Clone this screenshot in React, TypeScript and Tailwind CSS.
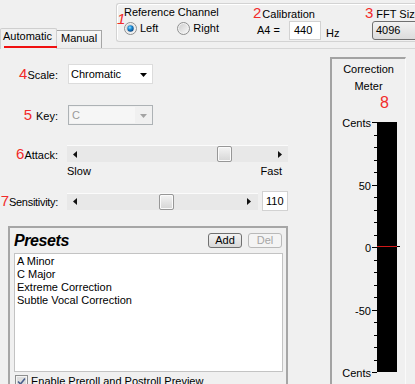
import React from 'react';

function Num({ n, className = '' }: { n: string; className?: string }) {
  return <span className={`text-[15px] leading-[15px] text-[#f22b2b] ${className}`}>{n}</span>;
}

function DropArrow({ color = '#000' }: { color?: string }) {
  return (
    <svg width="7" height="4" viewBox="0 0 7 4" className="block">
      <path d="M0 0 H7 L3.5 4 Z" fill={color} />
    </svg>
  );
}

function Radio({ checked, id }: { checked?: boolean; id: string }) {
  return (
    <svg width="13" height="13" viewBox="0 0 13 13" className="block shrink-0">
      <defs>
        <linearGradient id={`${id}-ring`} x1="0" y1="0" x2="1" y2="1">
          <stop offset="0" stopColor="#cfcfcf" />
          <stop offset="1" stopColor="#f7f7f7" />
        </linearGradient>
        <radialGradient id={`${id}-dot`} cx="0.4" cy="0.35" r="0.7">
          <stop offset="0" stopColor="#8fe0ff" />
          <stop offset="0.45" stopColor="#1a8ad6" />
          <stop offset="1" stopColor="#0b3f77" />
        </radialGradient>
      </defs>
      <circle cx="6.5" cy="6.5" r="6" fill="#f2f2f2" stroke="#8e8f8f" />
      <circle cx="6.5" cy="6.5" r="4.5" fill={`url(#${id}-ring)`} />
      {checked && <circle cx="6.5" cy="6.5" r="3.2" fill={`url(#${id}-dot)`} />}
    </svg>
  );
}

function Checkbox() {
  return (
    <svg width="13" height="13" viewBox="0 0 13 13" className="block shrink-0">
      <rect x="0.5" y="0.5" width="12" height="12" fill="#f4f4f4" stroke="#8e8f8f" />
      <rect x="2" y="2" width="9" height="9" fill="#dedede" />
      <path d="M3 6.5 L5.5 9 L10 3.5" fill="none" stroke="#4a5e8c" strokeWidth="1.6" />
    </svg>
  );
}

function ScrollSlider({ track, thumb, rightPad }: { track: string; thumb: string; rightPad: string }) {
  return (
    <div className={`relative flex h-[17px] items-center justify-between border-t border-[#fbfbfb] bg-[#e8e8e8] pl-[6px] ${rightPad} ${track}`}>
      <svg width="4" height="7" viewBox="0 0 4 7" className="block">
        <path d="M4 0 L0 3.5 L4 7 Z" fill="#111" />
      </svg>
      <svg width="4" height="7" viewBox="0 0 4 7" className="block">
        <path d="M0 0 L4 3.5 L0 7 Z" fill="#111" />
      </svg>
      <div
        className={`absolute top-0 h-[16px] w-[15px] rounded-[2px] border border-[#979797] bg-gradient-to-b from-[#f4f4f4] to-[#d6d6d6] shadow-[inset_0_0_0_1px_#fbfbfb] ${thumb}`}
      />
    </div>
  );
}

function FieldLabel({ n, text, textClass = '' }: { n: string; text: string; textClass?: string }) {
  return (
    <div className="flex w-[58px] shrink-0 items-baseline justify-end">
      <Num n={n} />
      <span className={textClass}>{text}</span>
    </div>
  );
}

function MeterScale() {
  const top = 11;
  const step = 12.5;
  const labels: Record<number, string> = { 0: 'Cents', 5: '50', 10: '0', 15: '-50', 20: 'Cents' };
  const ticks = Array.from({ length: 21 }, (_, i) => i);
  return (
    <svg width="73" height="275" viewBox="0 0 73 275" className="block">
      <rect x="45" y={top} width="20" height="250" fill="#000" />
      {ticks.map((i) => {
        const y = Math.round(top + i * step) + 0.5;
        const major = labels[i] !== undefined;
        return (
          <g key={i}>
            <line x1={major ? 40 : 42} x2="45" y1={y} y2={y} stroke="#000" strokeWidth="1" />
            {major && (
              <text
                x="39"
                y={y + 4}
                textAnchor="end"
                fontSize="11"
                fontFamily="'Liberation Sans', Arial, sans-serif"
                fill="#000"
              >
                {labels[i]}
              </text>
            )}
          </g>
        );
      })}
      <line x1="45" x2="65" y1="135.5" y2="135.5" stroke="#d01818" strokeWidth="1" />
      <line x1="65" x2="68" y1="135.5" y2="135.5" stroke="#000" strokeWidth="1" />
    </svg>
  );
}

export default function App() {
  return (
    <div className="h-[384px] w-[415px] overflow-hidden bg-[#f0f0f0] font-['Liberation_Sans',Arial,sans-serif] text-[11px] leading-[13px] text-black">
      {/* top strip: tabs + settings group */}
      <div className="flex h-[49px] border-b border-[#d6d6d6]">
        <div className="-mb-px flex items-end self-end">
          <div className="h-[21px] w-[57px] rounded-t-[2px] border border-b-0 border-[#cfcfcf] bg-[#f0f0f0] pl-[2px] pt-[1px]">
            <div>Automatic</div>
            <div className="ml-px mt-[3px] h-[2px] w-[53px] bg-[#f01010]" />
          </div>
          <div className="mb-px h-[18px] w-[45px] border-r border-t border-[#a5a5a5] bg-gradient-to-b from-[#f7f7f7] to-[#ececec] pl-[4px] pt-[1px]">
            Manual
          </div>
        </div>

        <div className="ml-[14px] mt-[3px] flex h-[39px] w-[320px] shrink-0 rounded-l-[3px] border border-r-0 border-[#d3d3d3] shadow-[inset_1px_1px_0_#fff]">
          {/* Reference Channel */}
          <div className="flex w-[136px] shrink-0">
            <Num n="1" className="mt-[7px] w-[7px] italic" />
            <div className="flex flex-col pt-[2px]">
              <div>Reference Channel</div>
              <div className="mt-[3px] flex h-[13px] items-center">
                <Radio id="r-left" checked />
                <span className="ml-[3px]">Left</span>
                <div className="ml-[19px]">
                  <Radio id="r-right" />
                </div>
                <span className="ml-[3px]">Right</span>
              </div>
            </div>
          </div>

          {/* Calibration */}
          <div className="flex w-[112px] shrink-0 flex-col">
            <div className="flex h-[17px] items-baseline pt-px">
              <Num n="2" />
              <span className="ml-px">Calibration</span>
            </div>
            <div className="flex h-[19px] items-center">
              <span className="ml-[4px] w-[32px]">A4 =</span>
              <div className="flex h-[19px] w-[32px] items-center border border-[#d2d2d2] bg-white pl-[4px]">440</div>
              <span className="ml-[5px] pt-[5px]">Hz</span>
            </div>
          </div>

          {/* FFT Size */}
          <div className="flex flex-1 flex-col">
            <div className="flex h-[17px] items-baseline pt-px">
              <Num n="3" />
              <span className="ml-[3px]">FFT Size</span>
            </div>
            <div className="ml-[7px] flex h-[19px] w-[70px] items-center rounded-[3px] border border-[#707070] bg-gradient-to-b from-[#f2f2f2] to-[#dcdcdc] pl-[3px]">
              4096
            </div>
          </div>
        </div>
      </div>

      {/* body */}
      <div className="flex">
        <div className="flex w-[330px] shrink-0 flex-col">
          {/* Scale */}
          <div className="mt-[15px] flex h-[20px] items-center">
            <FieldLabel n="4" text="Scale:" />
            <div className="relative ml-[10px] flex h-[20px] w-[85px] items-center border border-[#dcdcdc] bg-white pl-[2px]">
              Chromatic
              <div className="absolute right-[5px] top-[8px]">
                <DropArrow />
              </div>
            </div>
          </div>

          {/* Key */}
          <div className="mt-[21px] flex h-[20px] items-center">
            <FieldLabel n="5" text="Key:" textClass="ml-[4px]" />
            <div className="relative ml-[10px] flex h-[20px] w-[85px] items-center border border-[#adb2b5] bg-[#f0f0f0] p-px">
              <div className="flex h-full w-[65px] items-center bg-[#f6f6f6] pl-[2px] text-[#9a9a9a]">C</div>
              <div className="absolute right-[5px] top-[8px]">
                <DropArrow color="#a3a3a3" />
              </div>
            </div>
          </div>

          {/* Attack */}
          <div className="mt-[20px] flex h-[17px] items-center">
            <FieldLabel n="6" text="Attack:" />
            <div className="ml-[9px]">
              <ScrollSlider track="w-[221px]" thumb="left-[150px]" rightPad="pr-[6px]" />
            </div>
          </div>
          <div className="ml-[67px] mt-[3px] flex w-[221px] justify-between pr-[6px]">
            <span>Slow</span>
            <span>Fast</span>
          </div>

          {/* Sensitivity */}
          <div className="mt-[13px] flex h-[20px] items-center">
            <FieldLabel n="7" text="Sensitivity:" textClass="tracking-[-0.3px]" />
            <div className="ml-[9px]">
              <ScrollSlider track="w-[191px]" thumb="left-[92px]" rightPad="pr-[7px]" />
            </div>
            <div className="ml-[4px] flex h-[20px] w-[26px] items-center border border-[#d2d2d2] bg-white pl-[3px]">110</div>
          </div>

          {/* Presets */}
          <div className="ml-[8px] mt-[15px] h-[170px] w-[280px] shrink-0 border-2 border-[#a6a6a6]">
            <div className="mt-[3px] flex h-[19px] items-center pl-[4px] pr-[4px]">
              <span className="text-[16px] font-bold italic leading-[19px] tracking-[-0.4px]">Presets</span>
              <div className="ml-auto flex gap-[6px]">
                <div className="flex h-[15px] w-[34px] items-center justify-center rounded-[3px] border border-[#707070] bg-gradient-to-b from-[#f3f3f3] to-[#d9d9d9]">
                  Add
                </div>
                <div className="flex h-[15px] w-[34px] items-center justify-center rounded-[3px] border border-[#b9b9b9] bg-[#f4f4f4] text-[#a6a6a6]">
                  Del
                </div>
              </div>
            </div>
            <div className="ml-[4px] mt-[3px] h-[119px] w-[269px] border border-[#c3c3c3] bg-white pl-[2px] pt-px leading-[13px]">
              <div>A Minor</div>
              <div>C Major</div>
              <div>Extreme Correction</div>
              <div>Subtle Vocal Correction</div>
            </div>
            <div className="ml-[5px] mt-[3px] flex items-center gap-[3px]">
              <Checkbox />
              <span>Enable Preroll and Postroll Preview</span>
            </div>
          </div>
        </div>

        {/* Correction meter */}
        <div className="mt-[8px] flex h-[340px] w-[76px] shrink-0 flex-col border-l-2 border-r border-t-2 border-[#a3a3a3] border-r-[#fafafa]">
          <div className="pt-[2px] text-center leading-[17px]">Correction</div>
          <div className="text-center leading-[17px]">Meter</div>
          <div className="pl-[48px] text-[16px] leading-[16px] text-[#f22b2b]">8</div>
          <MeterScale />
        </div>
      </div>
    </div>
  );
}
